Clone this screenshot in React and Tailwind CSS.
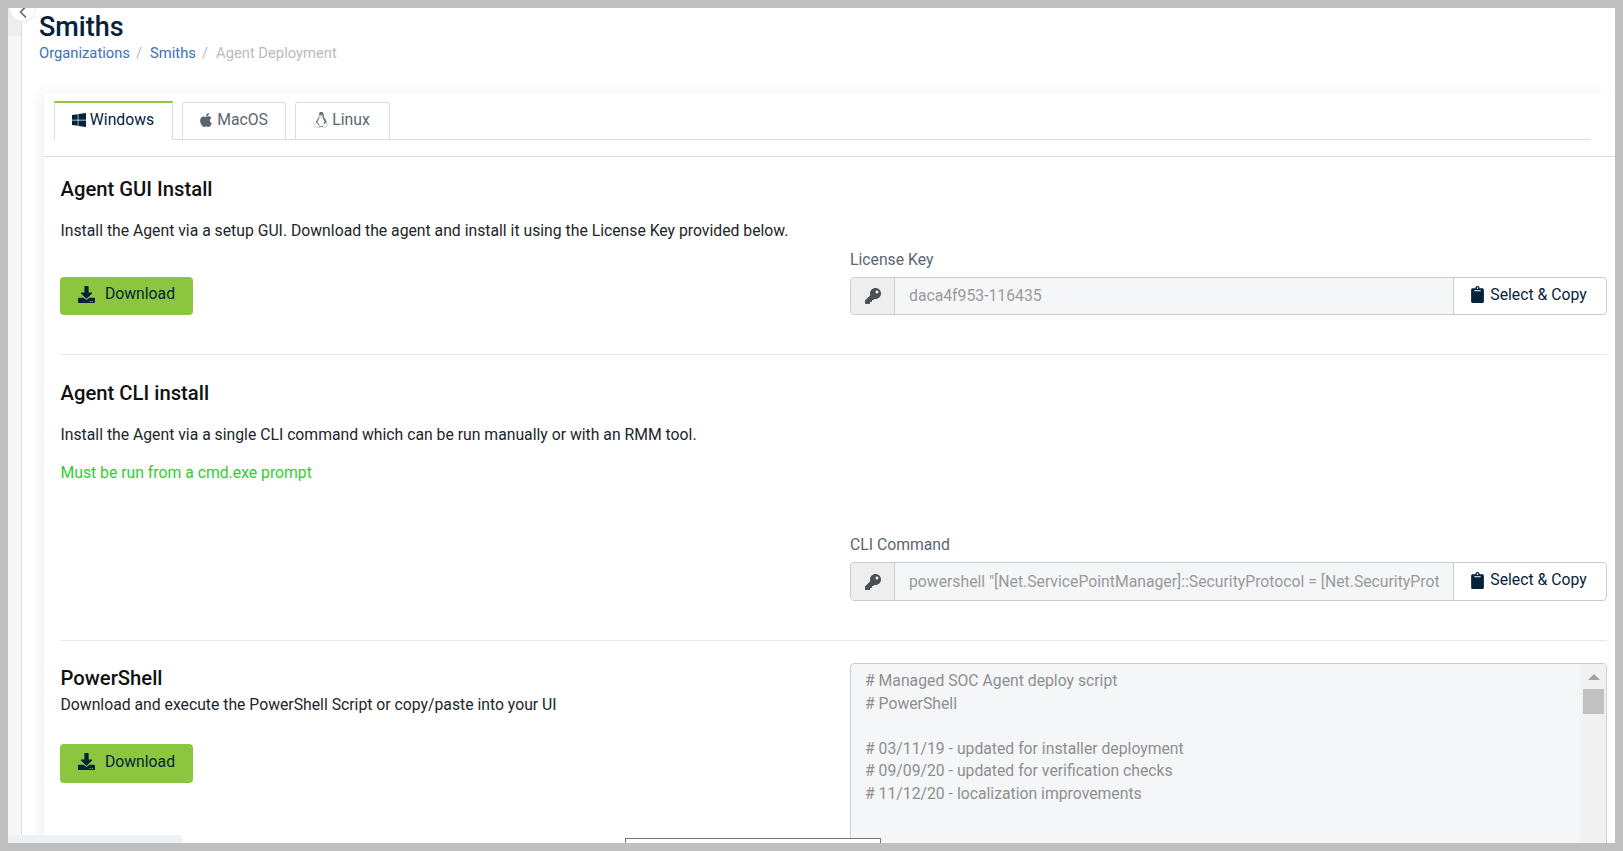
import { ChevronLeft } from "lucide-react"
import { FaWindows, FaApple, FaLinux, FaKey, FaClipboard, FaDownload } from "react-icons/fa"

function DownloadButton({ tall }) {
  return (
    <button className={`flex w-[133px] items-center justify-center gap-[10px] rounded-[4px] bg-[#8cc63f] pb-[4px] text-[15.75px] text-[#04233a] ${tall ? "h-[39px]" : "h-[38px]"}`}>
      <FaDownload className="text-[17px]" />
      Download
    </button>
  )
}

function CopyField({ value, tall }) {
  return (
    <div className={`flex w-[757px] rounded-[4px] border border-[#ccc] text-[15.75px] ${tall ? "h-[39px]" : "h-[38px]"}`}>
      <div className="flex w-[44px] items-center justify-center rounded-l-[4px] border-r border-[#ccc] bg-[#eee] text-[#495057]">
        <FaKey className="text-[16px]" />
      </div>
      <div className="flex min-w-0 flex-1 items-center overflow-hidden whitespace-nowrap bg-[#f4f6f8] px-[14px] text-[#9a9a9a]">
        <span className="block w-full overflow-hidden">{value}</span>
      </div>
      <button className="flex w-[153px] items-center justify-center gap-[4px] border-l border-[#ccc] pb-[3px] pr-[4px] text-[#04233a]">
        <FaClipboard className="text-[17px]" />
        Select & Copy
      </button>
    </div>
  )
}

const scriptLines = [
  "# Managed SOC Agent deploy script",
  "# PowerShell",
  "",
  "# 03/11/19 - updated for installer deployment",
  "# 09/09/20 - updated for verification checks",
  "# 11/12/20 - localization improvements",
]

export default function App() {
  return (
    <div
      className="h-[851px] w-[1623px] overflow-hidden border-8 border-[#bfbfbf] bg-white text-[#04233a]"
      style={{ fontFamily: "Roboto, sans-serif" }}
    >
      <div className="relative flex h-full overflow-hidden">
        {/* sidebar strip */}
        <div className="w-[14px] shrink-0 border-r border-[#ddd] bg-[#f7f7f7]">
          <div className="h-[28px] bg-[#eee]" />
        </div>
        <div className="absolute -top-[13px] left-[1px] flex h-[27px] w-[27px] items-center justify-center rounded-full border border-[#e5e5e5] bg-white text-[#666]">
          <ChevronLeft size={20} className="mt-[7px]" />
        </div>
        <div className="absolute bottom-0 left-0 h-[8px] w-[174px] rounded-tr-[4px] bg-[#eef1f4]" />

        <main className="min-w-0 flex-1">
          <div className="h-[85px] pl-[17px] pt-[2px]">
            <h1 className="text-[27px] font-medium leading-[34px]">Smiths</h1>
            <div className="-mt-[2px] flex text-[14.75px] leading-[22px]">
              <span className="text-[#3a71b8]">Organizations</span>
              <span className="ml-[6px] mr-[3px] text-[#bbb]">/</span>
              <span className="ml-[5px] text-[#3a71b8]">Smiths</span>
              <span className="ml-[6px] mr-[3px] text-[#bbb]">/</span>
              <span className="ml-[5px] text-[#bbb]">Agent Deployment</span>
            </div>
          </div>

          <section className="ml-[22px] h-[800px] shadow-[-6px_0_12px_rgba(0,0,0,0.05)]">
            {/* tabs */}
            <div className="border-b border-[#ddd] pb-[16px] pl-[10px] pt-[8px]">
              <div className="mr-[25px] flex h-[39px] gap-[9px] border-b border-[#ddd]">
                <div className="-mb-px flex w-[119px] items-center justify-center gap-[3px] border-x border-t-2 border-x-[#ddd] border-t-[#8cc63f] bg-white pb-[4px] pr-[2px] text-[15.75px] text-[#04233a]">
                  <FaWindows className="text-[16px]" /> Windows
                </div>
                <div className="mt-[1px] flex w-[104px] items-center justify-center gap-[3px] rounded-t-[3px] border-x border-t border-[#ddd] pb-[2px] pr-[2px] text-[15.75px] text-[#5a6570]">
                  <FaApple className="text-[16px]" /> MacOS
                </div>
                <div className="mt-[1px] flex w-[95px] items-center justify-center gap-[3px] rounded-t-[3px] border-x border-t border-[#ddd] pb-[2px] pr-[2px] text-[15.75px] text-[#5a6570]">
                  <FaLinux className="text-[16px]" /> Linux
                </div>
              </div>
            </div>

            <div className="pl-[16px] pr-[8px]">
              {/* GUI */}
              <div className="h-[198px] border-b border-[#e8e8e8] pt-[16px]">
                <h2 className="pl-[0.5px] text-[20.25px] font-medium leading-[32px] text-[#111]">Agent GUI Install</h2>
                <p className="mt-[14px] pl-[0.5px] text-[15.75px] leading-[24px] text-[#212529]">
                  Install the Agent via a setup GUI. Download the agent and install it using the License Key provided below.
                </p>
                <div className="flex justify-between">
                  <div className="pt-[34px]">
                    <DownloadButton />
                  </div>
                  <div className="mt-[5px] w-[757px]">
                    <div className="mb-[5px] text-[15.75px] leading-[24px] text-[#5a6570]">License Key</div>
                    <CopyField value="daca4f953-116435" />
                  </div>
                </div>
              </div>

              {/* CLI */}
              <div className="h-[286px] border-b border-[#e8e8e8] pt-[22px]">
                <h2 className="pl-[0.5px] text-[20.25px] font-medium leading-[32px] text-[#111]">Agent CLI install</h2>
                <p className="mt-[14px] pl-[0.5px] text-[15.75px] leading-[24px] text-[#212529]">
                  Install the Agent via a single CLI command which can be run manually or with an RMM tool.
                </p>
                <p className="mt-[14px] pl-[0.5px] text-[15.75px] leading-[24px] text-[#32cd32]">Must be run from a cmd.exe prompt</p>
                <div className="ml-auto mt-[48px] w-[757px]">
                  <div className="mb-[5px] text-[15.75px] leading-[24px] text-[#5a6570]">CLI Command</div>
                  <CopyField tall value={'powershell "[Net.ServicePointManager]::SecurityProtocol = [Net.SecurityProt'} />
                </div>
              </div>

              {/* PowerShell */}
              <div className="flex justify-between pt-[22px]">
                <div>
                  <h2 className="-mt-[1px] pl-[0.5px] text-[20.25px] font-medium leading-[32px] text-[#111]">PowerShell</h2>
                  <p className="mt-[1px] pl-[0.5px] text-[15.75px] leading-[20px] text-[#212529]">
                    Download and execute the PowerShell Script or copy/paste into your UI
                  </p>
                  <div className="mt-[29px]">
                    <DownloadButton tall />
                  </div>
                </div>
                <div className="flex h-[300px] w-[757px] rounded-t-[4px] border border-[#ccc] bg-[#f4f6f8]">
                  <div className="flex-1 px-[14px] pt-[6px] text-[15.75px] leading-[22.5px] text-[#8f8f8f]">
                    {scriptLines.map((line, i) => (
                      <div key={i} className="h-[22.5px]">{line}</div>
                    ))}
                  </div>
                  <div className="relative w-[25px] bg-[#f1f1f1]">
                    <div className="absolute left-[7px] top-[10px] h-0 w-0 border-x-[6px] border-b-[6px] border-x-transparent border-b-[#a3a3a3]" />
                    <div className="absolute left-[2px] top-[25px] h-[25px] w-[21px] bg-[#c1c1c1]" />
                  </div>
                </div>
              </div>
            </div>
          </section>
        </main>
        <div className="absolute bottom-0 left-[617px] h-[5px] w-[256px] border border-b-0 border-[#777] bg-white" />
      </div>
    </div>
  )
}
